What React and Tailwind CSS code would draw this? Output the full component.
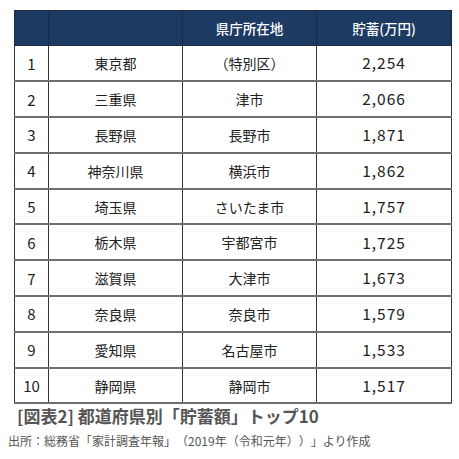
const rows = [
  ["1", "東京都", "（特別区）", "2,254"],
  ["2", "三重県", "津市", "2,066"],
  ["3", "長野県", "長野市", "1,871"],
  ["4", "神奈川県", "横浜市", "1,862"],
  ["5", "埼玉県", "さいたま市", "1,757"],
  ["6", "栃木県", "宇都宮市", "1,725"],
  ["7", "滋賀県", "大津市", "1,673"],
  ["8", "奈良県", "奈良市", "1,579"],
  ["9", "愛知県", "名古屋市", "1,533"],
  ["10", "静岡県", "静岡市", "1,517"],
];

const font = { fontFamily: '"Noto Sans CJK JP", "Noto Sans", sans-serif' };

export default function App() {
  return (
    <div
      className="w-[459px] h-[459px] bg-white overflow-hidden [text-spacing-trim:space-all]"
      style={font}
    >
      <div className="pt-[10px] pl-[14px]">
        <table className="border-collapse table-fixed w-[437px] text-[#222]">
          <colgroup>
            <col className="w-[34px]" />
            <col className="w-[134px]" />
            <col className="w-[134px]" />
            <col className="w-[135px]" />
          </colgroup>
          <thead>
            <tr className="h-[35px] bg-[#1c3a62] text-white text-[13.5px]">
              <th className="border border-[#1a2a40] font-medium"></th>
              <th className="border border-[#1a2a40] font-medium"></th>
              <th className="border border-[#1a2a40] font-medium">県庁所在地</th>
              <th className="border border-[#1a2a40] font-medium">貯蓄(万円)</th>
            </tr>
          </thead>
          <tbody>
            {rows.map((r) => (
              <tr key={r[0]} className="h-[35.8px]">
                <td className="border-x border-x-[#333] border-b-2 border-b-[#6e6e6e] text-center text-[15px] leading-none">
                  {r[0]}
                </td>
                <td className="border-x border-x-[#333] border-b-2 border-b-[#6e6e6e] text-center text-[14px] leading-none">
                  {r[1]}
                </td>
                <td className="border-x border-x-[#333] border-b-2 border-b-[#6e6e6e] text-center text-[14px] leading-none">
                  {r[2]}
                </td>
                <td className="border-x border-x-[#333] border-b-2 border-b-[#6e6e6e] text-center text-[15.5px] tracking-[1px] leading-none">
                  {r[3]}
                </td>
              </tr>
            ))}
          </tbody>
        </table>
      </div>
      <div className="pl-[17px] mt-0 text-[17px] font-bold text-[#555] leading-[24px]">
        [図表2] 都道府県別「貯蓄額」トップ10
      </div>
      <div className="pl-[8px] mt-[5px] text-[12px] text-[#555] leading-[16px]">
        出所：総務省「家計調査年報」（2019年（令和元年））」より作成
      </div>
    </div>
  );
}
